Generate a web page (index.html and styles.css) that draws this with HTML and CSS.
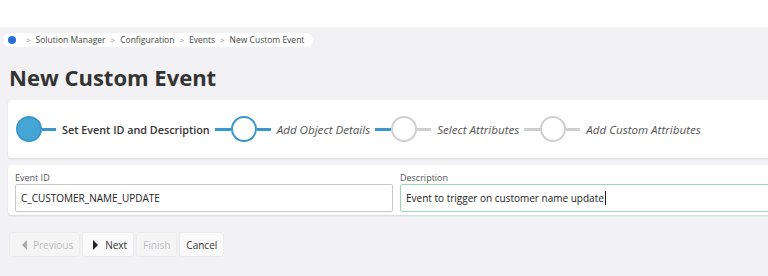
FILE: index.html
```html
<!DOCTYPE html>
<html lang="en">
<head>
    <meta charset="UTF-8">
    <title>New Custom Event</title>
    <link rel="stylesheet" href="styles.css">
</head>
<body>
    <div class="topbar"></div>

    <div class="page">
        <div class="crumbs">
            <span class="home-dot"></span>
            <span class="sep">&gt;</span><span>Solution Manager</span>
            <span class="sep">&gt;</span><span>Configuration</span>
            <span class="sep">&gt;</span><span>Events</span>
            <span class="sep">&gt;</span><span>New Custom Event</span>
        </div>

        <h1 class="title">New Custom Event</h1>

        <div class="card stepper">
            <div class="step done">
                <span class="circle"></span><span class="line after"></span>
                <span class="step-label current">Set Event ID and Description</span>
            </div>
            <div class="step active">
                <span class="line before"></span><span class="circle"></span><span class="line after"></span>
                <span class="step-label">Add Object Details</span>
            </div>
            <div class="step todo">
                <span class="line before blue"></span><span class="circle"></span><span class="line after"></span>
                <span class="step-label">Select Attributes</span>
            </div>
            <div class="step todo">
                <span class="line before"></span><span class="circle"></span><span class="line after"></span>
                <span class="step-label">Add Custom Attributes</span>
            </div>
        </div>

        <div class="card fields">
            <div class="field">
                <label for="event-id">Event ID</label>
                <input type="text" id="event-id" value="C_CUSTOMER_NAME_UPDATE">
            </div>
            <div class="field">
                <label for="description">Description</label>
                <div class="input-wrap">
                    <input type="text" id="description" class="focused" value="Event to trigger on customer name update">
                    <span class="caret"></span>
                </div>
            </div>
        </div>

        <div class="buttons">
            <button class="btn disabled prev"><span class="tri left"></span>Previous</button>
            <button class="btn"><span class="tri right"></span>Next</button>
            <button class="btn disabled">Finish</button>
            <button class="btn">Cancel</button>
        </div>
    </div>
</body>
</html>
```

FILE: styles.css
```css
*, *::before, *::after {
    box-sizing: border-box;
}
body {
    margin: 0;
    padding: 0;
    font-family: "Open Sans", "Liberation Sans", sans-serif;
    background-color: #f2f1f4;
    color: #333;
    overflow: hidden;
}

.topbar {
    height: 27px;
    background-color: white;
}

.page {
    padding: 6px 0 0 8px;
}

.crumbs {
    display: flex;
    align-items: center;
    gap: 5px;
    width: fit-content;
    height: 14px;
    margin-left: -5px;
    padding: 0 9px 0 5px;
    background-color: white;
    border-radius: 7px;
    font-size: 8.5px;
    line-height: 14px;
    color: #444;
}

.home-dot {
    width: 8px;
    height: 8px;
    border-radius: 50%;
    background-color: #2a6fd6;
    margin-right: 5px;
}

.crumbs .sep {
    color: #888;
    font-size: 8px;
}

.title {
    margin: 15px 0 0 1px;
    font-size: 22px;
    font-weight: 700;
    line-height: 30px;
    color: #333;
}

.card {
    background-color: white;
    border-radius: 4px 0 0 4px;
    box-shadow: 0 1px 2px rgba(0, 0, 0, 0.12);
}

.stepper {
    display: flex;
    align-items: center;
    height: 58px;
    margin-top: 8px;
    padding-left: 8px;
}

.step {
    display: flex;
    align-items: center;
}

.circle {
    width: 26px;
    height: 26px;
    border-radius: 50%;
    border: 2px solid #3a97cc;
    background-color: white;
}

.step.done .circle {
    background-color: #45a6d6;
    border-color: #3a97cc;
}

.step.todo .circle {
    border-color: #cfcfcf;
}

.line {
    width: 14px;
    height: 3px;
    background-color: #3a97cc;
}

.line.before {
    width: 16px;
    margin-left: 5px;
}

.step.todo .line {
    background-color: #cfcfcf;
}

.step.todo .line.blue {
    background-color: #3a97cc;
}

.step-label {
    margin-left: 6px;
    font-size: 11.6px;
    font-style: italic;
    color: #555;
}

.step-label.current {
    font-style: normal;
    font-weight: 600;
    font-size: 10.8px;
    color: #333;
}

.fields {
    display: flex;
    gap: 7px;
    margin-top: 7px;
    padding: 6px 0 3px 7px;
}

.field {
    display: flex;
    flex-direction: column;
    width: 378px;
    flex-shrink: 0;
}

.field label {
    font-size: 9px;
    color: #555;
    line-height: 13px;
}

.input-wrap {
    position: relative;
    display: flex;
    flex-direction: column;
}

.field input {
    height: 28px;
    padding: 0 5px;
    border: 1px solid #c8c8c8;
    border-radius: 2px;
    font-family: "Open Sans", "Liberation Sans", sans-serif;
    font-size: 10px;
    color: #222;
    background-color: white;
}

.field input.focused {
    border-color: #9fd9b4;
}

.caret {
    position: absolute;
    left: 205px;
    top: 7px;
    width: 1px;
    height: 14px;
    background-color: #222;
}

.buttons {
    display: flex;
    gap: 2px;
    margin-top: 17px;
    margin-left: 1px;
}

.btn {
    display: flex;
    align-items: center;
    height: 25px;
    padding: 0 6px;
    border: 1px solid #ececec;
    border-radius: 3px;
    background-color: #fafafa;
    font-family: "Open Sans", "Liberation Sans", sans-serif;
    font-size: 10px;
    color: #333;
}

.btn.disabled {
    color: #bbb;
    background-color: #f5f5f6;
}

.tri {
    width: 0;
    height: 0;
    border-top: 5px solid transparent;
    border-bottom: 5px solid transparent;
}

.tri.right {
    border-left: 5px solid #222;
    margin: 0 7px 0 4px;
}

.tri.left {
    border-right: 5px solid #aaa;
    margin: 0 6px 0 6px;
}
```
